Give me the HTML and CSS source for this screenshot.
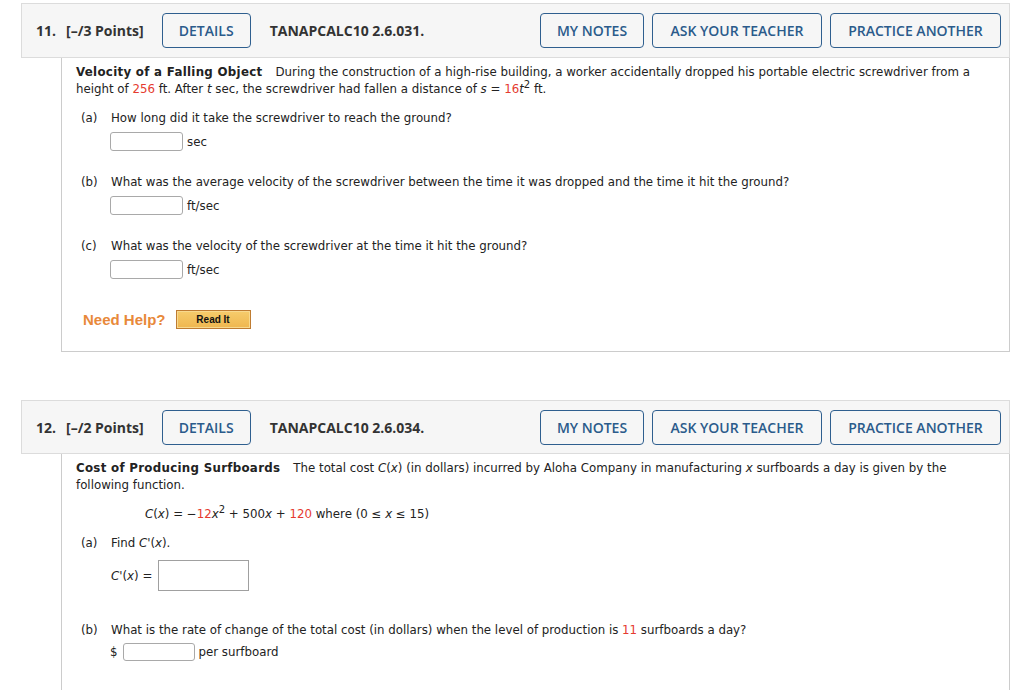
FILE: index.html
```html
<!DOCTYPE html>
<html>
<head>
<meta charset="utf-8">
<link rel="stylesheet" href="styles.css">
</head>
<body>
<div class="page">
  <section class="question">
    <div class="qhead">
      <span class="qnum">11.</span><span class="pts">[–/3 Points]</span>
      <button class="btn details">DETAILS</button>
      <span class="code">TANAPCALC10 2.6.031.</span>
      <span class="spacer"></span>
      <button class="btn notes">MY NOTES</button>
      <button class="btn ask">ASK YOUR TEACHER</button>
      <button class="btn practice">PRACTICE ANOTHER</button>
    </div>
    <div class="qbody">
      <p class="intro"><b class="title">Velocity of a Falling Object</b>During the construction of a high-rise building, a worker accidentally dropped his portable electric screwdriver from a height of <span class="red">256</span> ft. After <i>t</i> sec, the screwdriver had fallen a distance of <i>s</i> = <span class="red">16</span><i>t</i><sup>2</sup> ft.</p>
      <div class="part first">
        <div class="prompt"><span class="lbl">(a)</span><span>How long did it take the screwdriver to reach the ground?</span></div>
        <div class="answer"><span class="input"></span><span>sec</span></div>
      </div>
      <div class="part">
        <div class="prompt"><span class="lbl">(b)</span><span>What was the average velocity of the screwdriver between the time it was dropped and the time it hit the ground?</span></div>
        <div class="answer"><span class="input"></span><span>ft/sec</span></div>
      </div>
      <div class="part">
        <div class="prompt"><span class="lbl">(c)</span><span>What was the velocity of the screwdriver at the time it hit the ground?</span></div>
        <div class="answer"><span class="input"></span><span>ft/sec</span></div>
      </div>
      <div class="help">
        <span class="needhelp">Need Help?</span>
        <span class="readit">Read It</span>
      </div>
    </div>
  </section>

  <section class="question second">
    <div class="qhead">
      <span class="qnum">12.</span><span class="pts">[–/2 Points]</span>
      <button class="btn details">DETAILS</button>
      <span class="code">TANAPCALC10 2.6.034.</span>
      <span class="spacer"></span>
      <button class="btn notes">MY NOTES</button>
      <button class="btn ask">ASK YOUR TEACHER</button>
      <button class="btn practice">PRACTICE ANOTHER</button>
    </div>
    <div class="qbody tall">
      <p class="intro"><b class="title">Cost of Producing Surfboards</b>The total cost <i>C</i>(<i>x</i>) (in dollars) incurred by Aloha Company in manufacturing <i>x</i> surfboards a day is given by the following function.</p>
      <p class="formula"><i>C</i>(<i>x</i>) = −<span class="red">12</span><i>x</i><sup>2</sup> + 500<i>x</i> + <span class="red">120</span> where (0 ≤ <i>x</i> ≤ 15)</p>
      <div class="part find">
        <div class="prompt"><span class="lbl">(a)</span><span>Find <i>C</i>'(<i>x</i>).</span></div>
        <div class="answer big"><span><i>C</i>'(<i>x</i>) =</span><span class="input large"></span></div>
      </div>
      <div class="part rate">
        <div class="prompt"><span class="lbl">(b)</span><span>What is the rate of change of the total cost (in dollars) when the level of production is <span class="red">11</span> surfboards a day?</span></div>
        <div class="answer dollar"><span>$</span><span class="input short"></span><span>per surfboard</span></div>
      </div>
    </div>
  </section>
</div>
</body>
</html>
```
FILE: styles.css
```css
body {
  margin: 0;
  background: #fff;
  font-family: "DejaVu Sans", sans-serif;
  font-size: 11.8px;
  color: #222;
}

.page {
  padding: 3px 0 0 21px;
}

.question {
  width: 989px;
}

.question.second {
  margin-top: 48px;
}

.qhead {
  display: flex;
  align-items: center;
  box-sizing: border-box;
  height: 55px;
  border: 1px solid #dcdcdc;
  background: #f6f6f6;
  padding: 0 8px 0 14px;
  font-family: "Open Sans", sans-serif;
  font-size: 14px;
  font-weight: 700;
  color: #333;
}

.second .qhead {
  height: 54px;
}

.pts {
  margin-left: 10px;
}

.code {
  margin-left: 19px;
}

.spacer {
  flex: 1;
}

.btn {
  box-sizing: border-box;
  height: 35px;
  padding: 0;
  margin-left: 8px;
  border: 1px solid #2f5f8f;
  border-radius: 4px;
  background: transparent;
  font-family: "Open Sans", sans-serif;
  font-size: 14px;
  font-weight: 600;
  color: #2b5b8b;
  text-align: center;
}

.btn.details {
  width: 89px;
  margin-left: 18px;
}

.btn.notes {
  width: 104px;
}

.btn.ask {
  width: 170px;
}

.btn.practice {
  width: 171px;
}

.qbody {
  margin-left: 40px;
  border-left: 1px solid #cccccc;
  border-right: 1px solid #cccccc;
  border-bottom: 1px solid #cccccc;
  padding: 6px 14px 22px 14px;
}

.qbody.tall {
  padding-bottom: 60px;
}

.intro {
  margin: 0;
  line-height: 17px;
  padding-right: 20px;
}

.title {
  margin-right: 13px;
  font-weight: 700;
  letter-spacing: 0.3px;
}

.red {
  color: #e53b30;
}

sup {
  font-size: 10px;
  line-height: 0;
  vertical-align: 5px;
}

.part {
  margin-top: 23px;
}

.part.first {
  margin-top: 12px;
}

.prompt {
  display: flex;
  line-height: 17px;
}

.lbl {
  box-sizing: border-box;
  width: 35px;
  padding-left: 5px;
  flex: none;
}

.answer {
  display: flex;
  align-items: center;
  gap: 4px;
  margin-top: 5px;
  padding-left: 34px;
}

.input {
  box-sizing: border-box;
  width: 73px;
  height: 19px;
  border: 1px solid #a9a9a9;
  border-radius: 3px;
  background: #fff;
}

.help {
  display: flex;
  align-items: center;
  gap: 10px;
  margin-top: 31px;
  padding-left: 7px;
}

.needhelp {
  font-family: "Liberation Sans", Arial, sans-serif;
  font-size: 15px;
  font-weight: 700;
  color: #e8893a;
}

.readit {
  box-sizing: border-box;
  width: 75px;
  height: 19px;
  display: flex;
  align-items: center;
  justify-content: center;
  border: 1px solid #bf7c32;
  box-shadow: inset 0 0 0 1px #f8d98e;
  background: linear-gradient(#f6cc6c, #efb64f);
  font-family: "Liberation Sans", Arial, sans-serif;
  font-size: 10px;
  font-weight: 700;
  color: #111;
}

.formula {
  margin: 12px 0 0;
  padding-left: 69px;
  line-height: 17px;
}

.part.find {
  margin-top: 12px;
}

.answer.big {
  margin-top: 8px;
  padding-left: 35px;
  gap: 6px;
}

.input.large {
  width: 91px;
  height: 31px;
  border-radius: 0;
  border-color: #a0a0a0;
}

.part.rate {
  margin-top: 31px;
}

.answer.dollar {
  margin-top: 4px;
}

.input.short {
  width: 72px;
  height: 18px;
  margin-left: 1px;
}
```
